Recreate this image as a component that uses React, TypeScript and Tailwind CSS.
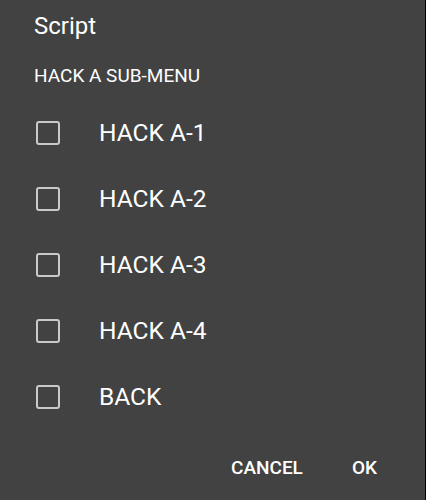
import React from "react";

const items = ["HACK A-1", "HACK A-2", "HACK A-3", "HACK A-4", "BACK"];

export default function App() {
  return (
    <div
      className="w-[426px] h-[500px] bg-[#424242] text-white flex"
      style={{ fontFamily: "Roboto, 'Liberation Sans', sans-serif" }}
    >
      <div className="flex-1 flex flex-col">
        <div className="pl-[34px] pt-[11px] text-[24px] leading-[30px]">Script</div>
        <div className="pl-[34px] pt-[23px] text-[19px] leading-[24px]">HACK A SUB-MENU</div>
        <div className="flex flex-col pt-[12px]">
          {items.map((label) => (
            <div key={label} className="h-[66px] flex items-center pl-[36px]">
              <div className="w-[24px] h-[24px] rounded-[3px] border-[2.5px] border-[#c9c9c9]" />
              <span className="ml-[39px] text-[24.5px]">{label}</span>
            </div>
          ))}
        </div>
        <div className="flex justify-end items-center gap-[49px] pr-[48px] pt-[26px] text-[19px] leading-[24px] font-medium">
          <span>CANCEL</span>
          <span>OK</span>
        </div>
      </div>
      <div className="w-px bg-black" />
    </div>
  );
}
